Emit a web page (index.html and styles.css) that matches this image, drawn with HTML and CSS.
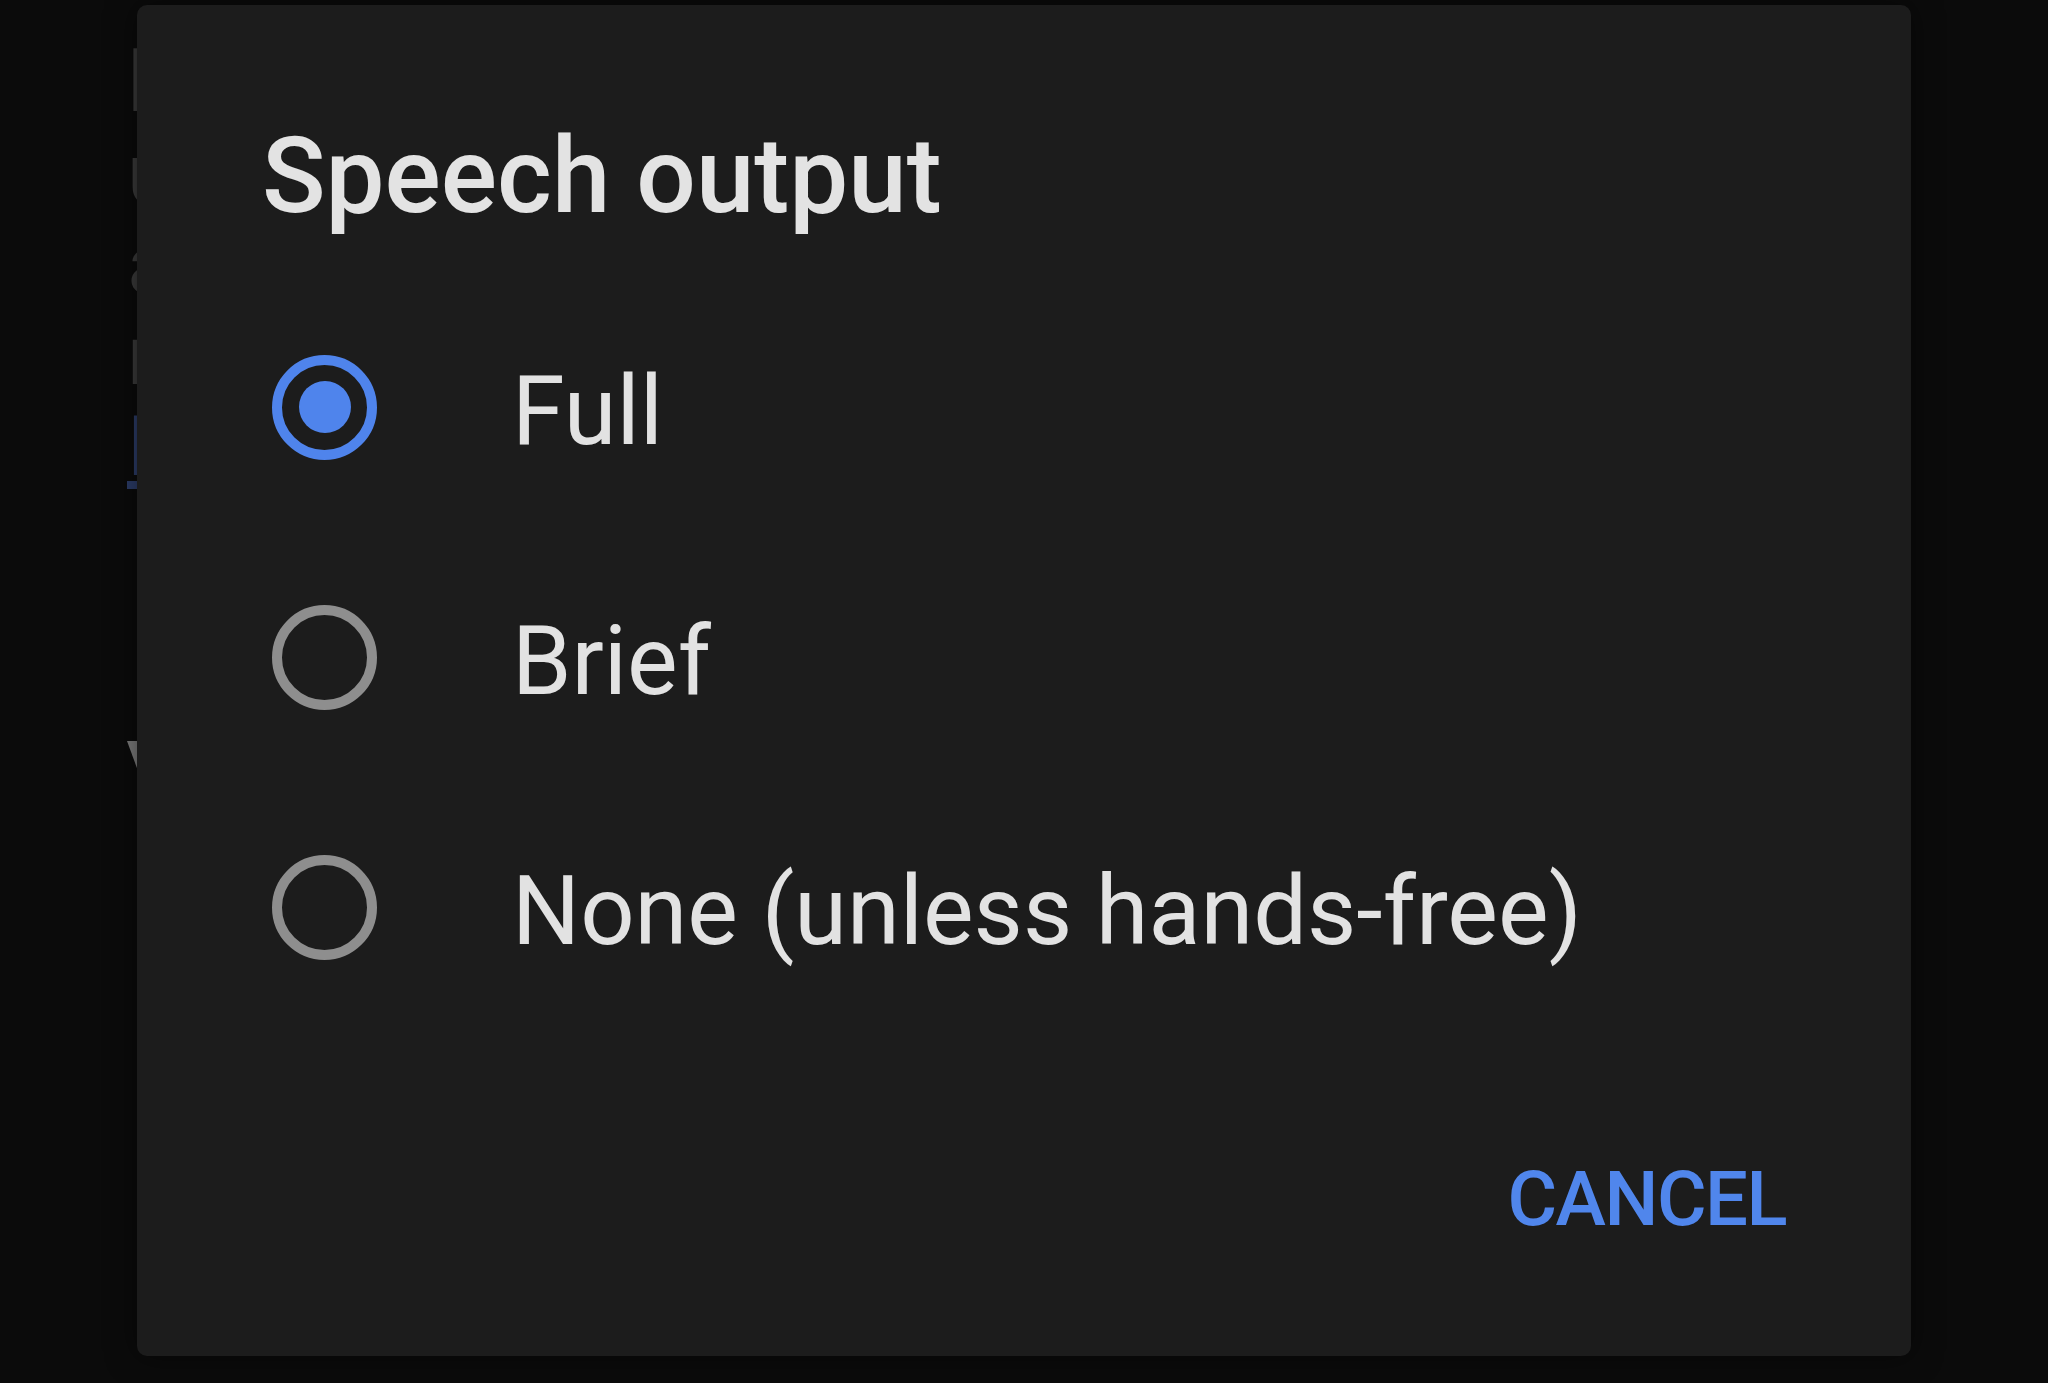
FILE: index.html
```html
<!DOCTYPE html>
<html lang="en">
<head>
<meta charset="utf-8">
<title>Speech output</title>
<link rel="stylesheet" href="styles.css">
</head>
<body>
<div class="screen">
  <div class="page" aria-hidden="true">
    <p class="bg-line">listen to spoken answers</p>
    <p class="bg-line">using your voice</p>
    <p class="bg-line">and get results</p>
    <p class="bg-line">no matter where</p>
    <p class="bg-line"><a class="bg-link">Learn more</a></p>
    <div class="bg-spacer"></div>
    <div class="bg-row"><span class="bg-caret"></span><span class="bg-line">Voice</span></div>
  </div>

  <div class="dialog" role="dialog" aria-label="Speech output">
    <h1 class="dialog-title">Speech output</h1>
    <div class="options">
      <div class="option">
        <span class="radio checked"><span class="dot"></span></span>
        <span class="option-label">Full</span>
      </div>
      <div class="option">
        <span class="radio"></span>
        <span class="option-label">Brief</span>
      </div>
      <div class="option">
        <span class="radio"></span>
        <span class="option-label">None (unless hands-free)</span>
      </div>
    </div>
    <div class="actions">
      <span class="btn">CANCEL</span>
    </div>
  </div>
</div>
</body>
</html>
```

FILE: styles.css
```css
html, body {
  margin: 0;
  padding: 0;
  background: #0b0b0b;
}

body {
  font-family: Roboto, "Noto Sans", sans-serif;
  width: 2048px;
  height: 1383px;
  overflow: hidden;
}

.screen {
  position: relative;
  width: 2048px;
  height: 1383px;
}

/* dimmed page behind the dialog: only its left edge is visible */
.page {
  box-sizing: border-box;
  width: 137px;
  height: 1383px;
  overflow: hidden;
  padding: 37px 0 0 127px;
  color: #3a3a3a;
  font-size: 84px;
  line-height: 91px;
}

.bg-line {
  margin: 0;
  white-space: nowrap;
}

.bg-link {
  color: #2b3b66;
  text-decoration: underline;
  text-underline-offset: 6px;
}

.bg-spacer {
  height: 222px;
}

.bg-row {
  display: flex;
  align-items: center;
  white-space: nowrap;
}

.bg-caret {
  flex: none;
  width: 0;
  height: 0;
  border-left: 14px solid transparent;
  border-right: 14px solid transparent;
  border-top: 38px solid #7a7a7a;
}

/* dialog */
.dialog {
  position: absolute;
  left: 137px;
  top: 5px;
  width: 1774px;
  height: 1351px;
  box-sizing: border-box;
  padding: 119px 124px 118px 125px;
  background: #1c1c1c;
  border-radius: 10px;
  box-shadow: 0 0 30px rgba(0, 0, 0, 0.5);
  display: flex;
  flex-direction: column;
}

.dialog-title {
  margin: 0;
  font-size: 105px;
  line-height: 105px;
  font-weight: 500;
  color: #e3e3e3;
}

.options {
  margin-top: 53px;
  display: flex;
  flex-direction: column;
}

.option {
  height: 250px;
  display: flex;
  align-items: center;
}

.radio {
  box-sizing: border-box;
  width: 105px;
  height: 105px;
  margin-left: 10px;
  border: 10px solid #8e8e8e;
  border-radius: 50%;
  display: flex;
  align-items: center;
  justify-content: center;
  flex: none;
}

.radio.checked {
  border-color: #4f84ec;
}

.dot {
  width: 52px;
  height: 52px;
  border-radius: 50%;
  background: #4f84ec;
}

.option-label {
  margin-left: 135px;
  padding-top: 8px;
  font-size: 95.5px;
  line-height: 96px;
  color: #e2e2e2;
  white-space: nowrap;
}

.actions {
  margin-top: auto;
  display: flex;
  justify-content: flex-end;
}

.btn {
  font-size: 76px;
  line-height: 77px;
  font-weight: 500;
  letter-spacing: -1.5px;
  margin-right: 1px;
  color: #5086ec;
}
```
